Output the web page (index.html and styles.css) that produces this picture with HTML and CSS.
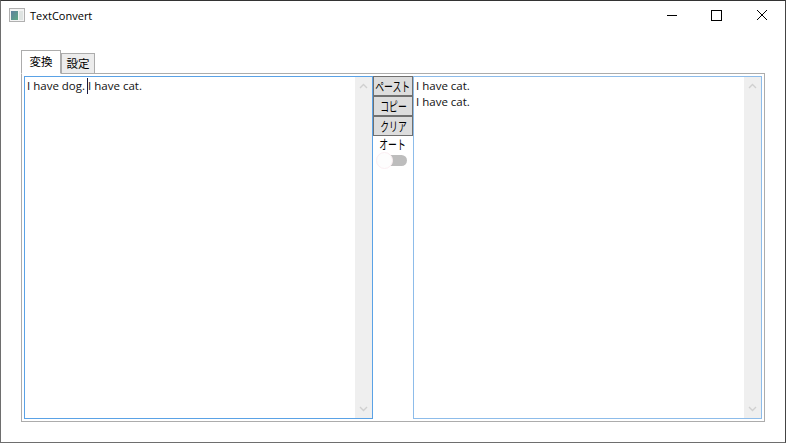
FILE: index.html
```html
<!DOCTYPE html>
<html lang="ja">
<head>
<meta charset="utf-8">
<title>TextConvert</title>
<link rel="stylesheet" href="styles.css">
</head>
<body>
<div class="window">
  <header class="titlebar">
    <svg class="appicon" width="16" height="14" viewBox="0 0 16 14">
      <defs>
        <linearGradient id="pane" x1="0" y1="0" x2="1" y2="1">
          <stop offset="0" stop-color="#5f7f9f"/>
          <stop offset="1" stop-color="#5fa884"/>
        </linearGradient>
      </defs>
      <rect x="0.5" y="0.5" width="15" height="13" fill="#f4f4f4" stroke="#b0b0b0"/>
      <rect x="2" y="3" width="7" height="9" fill="url(#pane)"/>
      <rect x="10" y="3" width="4" height="9" fill="#dfe4e2"/>
    </svg>
    <span class="apptitle">TextConvert</span>
    <div class="winbtns">
      <svg width="12" height="12" viewBox="0 0 12 12"><path d="M1 5.5H11" stroke="#000" fill="none"/></svg>
      <svg width="12" height="12" viewBox="0 0 12 12"><rect x="0.5" y="0.5" width="10" height="10" stroke="#000" fill="none"/></svg>
      <svg width="12" height="12" viewBox="0 0 12 12"><path d="M1 0L11 10M11 0L1 10" stroke="#000" fill="none"/></svg>
    </div>
  </header>
  <main class="content">
    <div class="tabs">
      <div class="tab active">変換</div>
      <div class="tab">設定</div>
    </div>
    <div class="panel">
      <div class="textbox left">
        <div class="text"><div class="line">I have dog.<span class="caret"></span>I have cat.</div></div>
        <div class="scrollbar">
          <svg width="9" height="6" viewBox="0 0 9 6"><path d="M1 5L4.5 1.5L8 5" stroke="#d0d0d0" stroke-width="1.4" fill="none"/></svg>
          <svg width="9" height="6" viewBox="0 0 9 6"><path d="M1 1L4.5 4.5L8 1" stroke="#d0d0d0" stroke-width="1.4" fill="none"/></svg>
        </div>
      </div>
      <div class="middle">
        <button class="btn"><span class="narrow">ペースト</span></button>
        <button class="btn"><span class="narrow">コピー</span></button>
        <button class="btn"><span class="narrow">クリア</span></button>
        <div class="auto"><span class="narrow">オート</span></div>
        <div class="toggle"><span class="knob"></span></div>
      </div>
      <div class="textbox right">
        <div class="text">
          <div class="line">I have cat.</div>
          <div class="line">I have cat.</div>
        </div>
        <div class="scrollbar">
          <svg width="9" height="6" viewBox="0 0 9 6"><path d="M1 5L4.5 1.5L8 5" stroke="#d0d0d0" stroke-width="1.4" fill="none"/></svg>
          <svg width="9" height="6" viewBox="0 0 9 6"><path d="M1 1L4.5 4.5L8 1" stroke="#d0d0d0" stroke-width="1.4" fill="none"/></svg>
        </div>
      </div>
    </div>
  </main>
</div>
</body>
</html>
```
FILE: styles.css
```css
* { box-sizing: border-box; }
html, body { margin: 0; padding: 0; background: #fff; overflow: hidden; }
body { width: 786px; height: 443px; font-family: "Open Sans", "Noto Sans", "Noto Sans CJK JP", sans-serif; font-size: 11.5px; color: #111; }
.window { width: 786px; height: 443px; border: 1px solid #6e6e6e; border-top-color: #333; border-right-color: #444; display: flex; flex-direction: column; background: #fff; }
.titlebar { height: 30px; display: flex; align-items: center; padding-left: 8px; flex: none; }
.appicon { flex: none; margin-top: -2px; }
.apptitle { margin-left: 5px; margin-top: -2px; font-size: 11px; color: #000; }
.winbtns { margin-left: auto; display: flex; gap: 33px; padding-right: 17px; }
.winbtns svg { display: block; }
.content { flex: 1; padding: 20px; display: flex; flex-direction: column; min-height: 0; }
.tabs { display: flex; height: 23px; align-items: flex-end; flex: none; position: relative; z-index: 1; margin-bottom: -1px; }
.tab { height: 21px; width: 34px; border: 1px solid #acacac; background: #ececec; font-family: "Noto Sans CJK JP", sans-serif; font-size: 11.5px; line-height: 19px; text-align: center; color: #000; }
.tab.active { height: 24px; width: 40px; background: #fff; border-bottom-color: #fff; line-height: 20px; padding-bottom: 3px; }
.panel { flex: 1; min-height: 0; border: 1px solid #acacac; padding: 2px; display: flex; background: #fff; }
.textbox { display: flex; min-width: 0; border: 1px solid #5aa2e6; }
.textbox.left { width: 350px; }
.textbox.right { width: 350px; border-color: #8dbcea; }
.text { flex: 1; padding: 1px 2px; }
.line { height: 16px; line-height: 16px; white-space: nowrap; }
.caret { display: inline-block; width: 1px; height: 16px; background: #1a1a40; vertical-align: -4px; margin: 0 0 0 2px; }
.scrollbar { width: 17px; flex: none; background: #efefef; display: flex; flex-direction: column; justify-content: space-between; align-items: center; padding: 6px 0; }
.scrollbar svg { display: block; }
.middle { width: 40px; flex: none; display: flex; flex-direction: column; align-items: center; }
.btn { width: 40px; height: 20px; padding: 0 0 2px; border: 1px solid #707070; background: #dddddd; font-family: "Noto Sans CJK JP", sans-serif; font-size: 13px; line-height: 15px; color: #000; white-space: nowrap; display: flex; align-items: center; justify-content: center; }
.narrow { display: inline-block; flex: none; transform: scaleX(0.68); transform-origin: center; }
.auto { font-family: "Noto Sans CJK JP", sans-serif; font-size: 13px; line-height: 16px; color: #000; white-space: nowrap; }
.toggle { width: 40px; height: 17px; margin-top: 1px; position: relative; }
.toggle::before { content: ""; position: absolute; left: 10px; top: 2px; width: 24px; height: 11px; border-radius: 6px; background: #bdbdbd; }
.knob { position: absolute; left: 3px; top: -1px; width: 17px; height: 17px; border-radius: 50%; background: #fdfdfd; border: 1px solid #fbeef2; }
```
